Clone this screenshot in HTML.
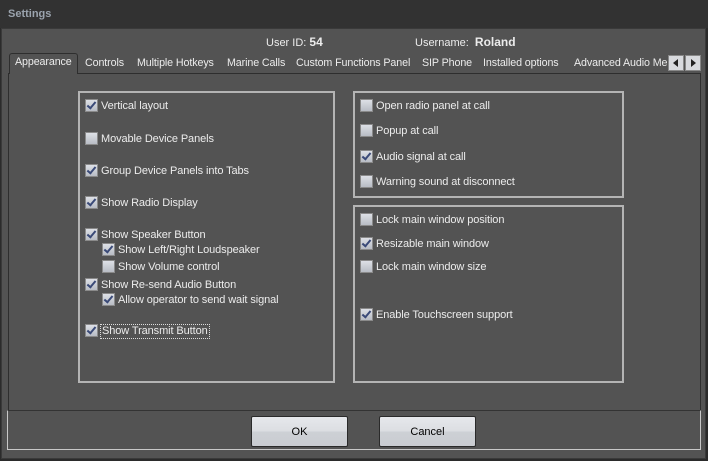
<!DOCTYPE html>
<html><head><style>
body{margin:0;width:708px;height:461px;background:#2b2b2b;font-family:"Liberation Sans",sans-serif;font-size:11px;color:#ececec;position:relative;overflow:hidden}
.a{position:absolute}
.title{left:0;top:0;width:708px;height:28px;background:#323232}
.win{left:1px;top:28px;width:705px;height:431px;background:#535353;border:1px solid #3a3a3a;box-sizing:border-box}
.box{border:2px solid #b4b4b4;box-sizing:border-box}
.cb{position:absolute;width:11px;height:11px;border:1px solid #8a8a8a;background:linear-gradient(#dde0e6,#b8bcc4);}
.cb.c::after{content:"";position:absolute;left:3px;top:0px;width:3px;height:7px;border:solid #3a4a78;border-width:0 2px 2px 0;transform:rotate(40deg)}
.lb{position:absolute;white-space:nowrap;line-height:13px;margin-top:1px;letter-spacing:-0.1px}
.tab{position:absolute;top:57px;white-space:nowrap;font-size:10.7px;letter-spacing:-0.1px}
.btn{position:absolute;top:416px;width:97px;height:31px;border:1px solid #2a2a2a;border-radius:2px;box-sizing:border-box;background:linear-gradient(#e6e8ec 0%,#dcdee2 48%,#cdd0d5 52%,#c9ccd1 100%);color:#000;text-align:center;line-height:31px;font-size:11px}
</style></head><body>
<div class="a title"></div>
<div class="a" style="left:8px;top:8px;font-weight:bold;color:#9aa3ad;font-size:11px">Settings</div>
<div class="a win"></div>
<div class="a" style="left:266px;top:35px">User ID: <b style="font-size:12px">54</b></div>
<div class="a" style="left:415px;top:35px">Username: &nbsp;<b style="font-size:12px">Roland</b></div>
<div class="a" style="left:8px;top:73px;width:693px;height:338px;border:1px solid #2e2e2e;border-bottom:none;box-sizing:border-box"></div>
<div class="a" style="left:9px;top:53px;width:69px;height:21px;background:#535353;border:1px solid #2e2e2e;border-bottom:none;border-radius:3px 3px 0 0;box-sizing:border-box"></div>
<div class="tab" style="left:15px;top:56px">Appearance</div>
<div class="tab" style="left:85px">Controls</div>
<div class="tab" style="left:137px">Multiple Hotkeys</div>
<div class="tab" style="left:227px">Marine Calls</div>
<div class="tab" style="left:296px">Custom Functions Panel</div>
<div class="tab" style="left:422px">SIP Phone</div>
<div class="tab" style="left:483px">Installed options</div>
<div class="tab" style="left:574px;width:93px;overflow:hidden">Advanced Audio Menu</div>
<div class="a" style="left:668px;top:55px;width:16px;height:16px;background:#d8dade;border:1px solid #888;box-sizing:border-box"><div class="a" style="left:4px;top:3px;border:4px solid transparent;border-right:5px solid #222;border-left:0"></div></div>
<div class="a" style="left:685px;top:55px;width:16px;height:16px;background:#d8dade;border:1px solid #888;box-sizing:border-box"><div class="a" style="left:5px;top:3px;border:4px solid transparent;border-left:5px solid #222;border-right:0"></div></div>
<div class="a box" style="left:78px;top:91px;width:257px;height:292px"></div>
<div class="a box" style="left:353px;top:91px;width:271px;height:107px"></div>
<div class="a box" style="left:353px;top:205px;width:271px;height:178px"></div>
<div class="cb c" style="left:85px;top:99px"></div><div class="lb" style="left:101px;top:99px">Vertical layout</div>
<div class="cb" style="left:85px;top:132px"></div><div class="lb" style="left:101px;top:132px">Movable Device Panels</div>
<div class="cb c" style="left:85px;top:164px"></div><div class="lb" style="left:101px;top:164px">Group Device Panels into Tabs</div>
<div class="cb c" style="left:85px;top:196px"></div><div class="lb" style="left:101px;top:196px">Show Radio Display</div>
<div class="cb c" style="left:85px;top:228px"></div><div class="lb" style="left:101px;top:228px">Show Speaker Button</div>
<div class="cb c" style="left:102px;top:243px"></div><div class="lb" style="left:118px;top:243px">Show Left/Right Loudspeaker</div>
<div class="cb" style="left:102px;top:260px"></div><div class="lb" style="left:118px;top:260px">Show Volume control</div>
<div class="cb c" style="left:85px;top:278px"></div><div class="lb" style="left:101px;top:278px">Show Re-send Audio Button</div>
<div class="cb c" style="left:102px;top:293px"></div><div class="lb" style="left:118px;top:293px">Allow operator to send wait signal</div>
<div class="cb c" style="left:85px;top:324px"></div><div class="lb" style="left:100px;top:323px;border:1px dotted #ddd;padding:0 1px">Show Transmit Button</div>
<div class="cb" style="left:360px;top:99px"></div><div class="lb" style="left:376px;top:99px">Open radio panel at call</div>
<div class="cb" style="left:360px;top:124px"></div><div class="lb" style="left:376px;top:124px">Popup at call</div>
<div class="cb c" style="left:360px;top:150px"></div><div class="lb" style="left:376px;top:150px">Audio signal at call</div>
<div class="cb" style="left:360px;top:175px"></div><div class="lb" style="left:376px;top:175px">Warning sound at disconnect</div>
<div class="cb" style="left:360px;top:213px"></div><div class="lb" style="left:376px;top:213px">Lock main window position</div>
<div class="cb c" style="left:360px;top:237px"></div><div class="lb" style="left:376px;top:237px">Resizable main window</div>
<div class="cb" style="left:360px;top:260px"></div><div class="lb" style="left:376px;top:260px">Lock main window size</div>
<div class="cb c" style="left:360px;top:308px"></div><div class="lb" style="left:376px;top:308px">Enable Touchscreen support</div>
<div class="a" style="left:7px;top:410px;width:694px;height:40px;border:1px solid #c8c8c8;border-top-color:#333;box-sizing:border-box"></div>
<div class="btn" style="left:251px">OK</div>
<div class="btn" style="left:379px">Cancel</div>
</body></html>
